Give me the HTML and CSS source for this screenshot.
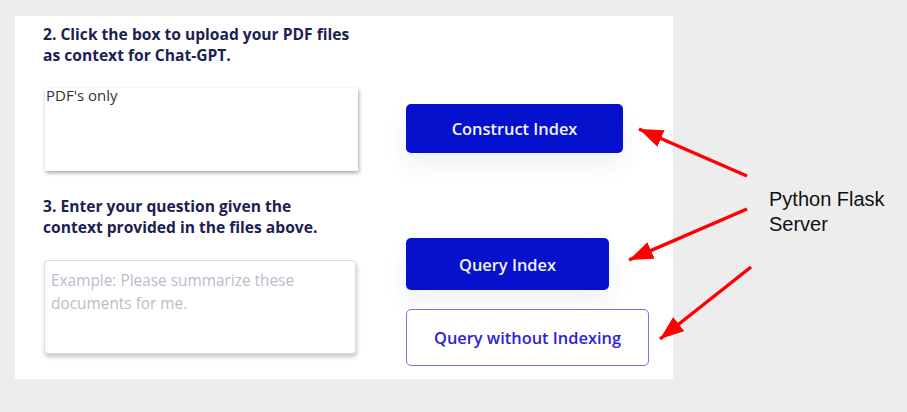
FILE: index.html
```html
<!DOCTYPE html>
<html lang="en">
<head>
    <meta charset="UTF-8">
    <meta name="viewport" content="width=device-width, initial-scale=1.0">
    <title>Chat-GPT PDF Context</title>
    <link rel="stylesheet" href="styles.css">
</head>
<body>
    <div class="page">
        <div class="panel">
            <div class="left-col">
                <h3 class="step">2. Click the box to upload your PDF files<br>as context for Chat-GPT.</h3>
                <div class="upload-box">PDF's only</div>

                <h3 class="step step-question">3. Enter your question given the<br>context provided in the files above.</h3>
                <textarea class="question" placeholder="Example: Please summarize these documents for me."></textarea>
            </div>
            <div class="right-col">
                <button class="btn btn-construct">Construct Index</button>
                <button class="btn btn-query">Query Index</button>
                <button class="btn btn-outline">Query without Indexing</button>
            </div>
        </div>
        <div class="note">Python Flask<br>Server</div>
    </div>

    <!-- annotation arrows drawn over the screenshot -->
    <svg class="arrows" width="907" height="412" viewBox="0 0 907 412">
        <defs>
            <marker id="head" markerUnits="userSpaceOnUse" markerWidth="26" markerHeight="20" refX="24" refY="9" orient="auto">
                <path d="M0,0 L24,9 L0,18 z" fill="#ff0000"/>
            </marker>
        </defs>
        <line x1="747" y1="176" x2="639" y2="129" stroke="#ff0000" stroke-width="3.5" marker-end="url(#head)"/>
        <line x1="747" y1="209" x2="629" y2="260" stroke="#ff0000" stroke-width="3.5" marker-end="url(#head)"/>
        <line x1="751" y1="267" x2="660" y2="339" stroke="#ff0000" stroke-width="3.5" marker-end="url(#head)"/>
    </svg>
</body>
</html>
```

FILE: styles.css
```css
:root {
    --page-bg: #ededed;
    --panel-bg: #fff;
    --heading-color: #1d2152;
    --text-color: #333;
    --placeholder-color: #b9bccb;
    --btn-blue: #0511cd;
    --outline-border: #7d72e6;
    --outline-text: #2d22d6;
}

body {
    margin: 0;
    padding: 0;
    background-color: var(--page-bg);
    font-family: 'Open Sans', 'Liberation Sans', sans-serif;
}

.page {
    display: flex;
    align-items: flex-start;
    padding: 16px 0 0 15px;
}

.panel {
    display: flex;
    width: 658px;
    height: 363px;
    background-color: var(--panel-bg);
    box-sizing: border-box;
    padding: 8px 0 0 28px;
}

.left-col {
    display: flex;
    flex-direction: column;
    width: 316px;
}

.step {
    margin: 0;
    font-size: 15.6px;
    font-weight: 700;
    line-height: 21px;
    color: var(--heading-color);
    white-space: nowrap;
}

.upload-box {
    margin-top: 22px;
    width: 313px;
    height: 83px;
    margin-left: 2px;
    padding-left: 1px;
    box-sizing: border-box;
    font-size: 15px;
    line-height: 1;
    color: var(--text-color);
    background: #fff;
    box-shadow: 1px 2px 4px rgba(0, 0, 0, 0.35);
}

.step-question {
    margin-top: 25px;
}

.question {
    margin: 22px 0 0 1px;
    width: 312px;
    height: 94px;
    box-sizing: border-box;
    padding: 8px 6px;
    border: 1px solid #dcdce6;
    border-radius: 4px;
    box-shadow: 1px 3px 4px rgba(0, 0, 0, 0.22);
    font-family: inherit;
    font-size: 15.4px;
    line-height: 23px;
    resize: none;
    outline: none;
}

.question::placeholder {
    color: var(--placeholder-color);
}

.right-col {
    display: flex;
    flex-direction: column;
    align-items: flex-start;
    margin-left: 47px;
    padding-top: 80px;
}

.btn {
    font-family: inherit;
    font-size: 16.4px;
    font-weight: 600;
    border-radius: 5px;
    cursor: pointer;
    box-sizing: border-box;
}

.btn-construct, .btn-query {
    background-color: var(--btn-blue);
    color: #f2f2ff;
    border: none;
    box-shadow: 0 12px 24px rgba(40, 40, 120, 0.07);
}

.btn-construct {
    width: 217px;
    height: 49px;
}

.btn-query {
    margin-top: 85px;
    width: 203px;
    height: 52px;
}

.btn-outline {
    margin-top: 19px;
    width: 243px;
    height: 57px;
    background-color: #fff;
    color: var(--outline-text);
    border: 1.5px solid var(--outline-border);
}

.note {
    margin: 171px 0 0 96px;
    font-family: 'Liberation Sans', Arial, sans-serif;
    font-size: 20px;
    line-height: 25px;
    color: #111;
}

.arrows {
    position: absolute;
    left: 0;
    top: 0;
    pointer-events: none;
}
```
